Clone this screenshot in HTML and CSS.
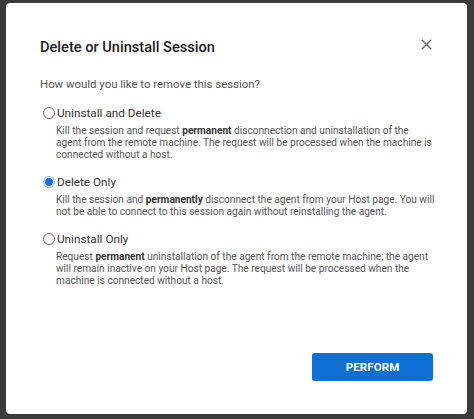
FILE: index.html
```html
<!DOCTYPE html>
<html>
<head>
<meta charset="utf-8">
<link rel="stylesheet" href="styles.css">
</head>
<body>
<div class="dialog">
  <div class="header">
    <h1 class="title">Delete or Uninstall Session</h1>
    <button class="close" aria-label="Close">
      <svg width="11" height="11" viewBox="0 0 11 11"><path d="M0.8 0.8L10.2 10.2M10.2 0.8L0.8 10.2" stroke="#6b6b6b" stroke-width="1.5" fill="none"/></svg>
    </button>
  </div>
  <p class="question">How would you like to remove this session?</p>
  <div class="options">
    <label class="option">
      <span class="row"><span class="radio"></span><span class="label">Uninstall and Delete</span></span>
      <span class="desc">Kill the session and request <b>permanent</b> disconnection and uninstallation of the agent from the remote machine. The request will be processed when the machine is connected without a host.</span>
    </label>
    <label class="option">
      <span class="row"><span class="radio checked"></span><span class="label">Delete Only</span></span>
      <span class="desc">Kill the session and <b>permanently</b> disconnect the agent from your Host page. You will not be able to connect to this session again without reinstalling the agent.</span>
    </label>
    <label class="option">
      <span class="row"><span class="radio"></span><span class="label">Uninstall Only</span></span>
      <span class="desc">Request <b>permanent</b> uninstallation of the agent from the remote machine; the agent will remain inactive on your Host page. The request will be processed when the machine is connected without a host.</span>
    </label>
  </div>
  <div class="footer">
    <button class="perform">PERFORM</button>
  </div>
</div>
</body>
</html>
```
FILE: styles.css
```css
html, body {
  margin: 0;
  padding: 0;
  background: #3b3b3b;
  height: 100%;
}
body {
  font-family: Roboto, "Liberation Sans", sans-serif;
  padding: 3px 0 0 6px;
  box-sizing: border-box;
}
.dialog {
  width: 461px;
  height: 411px;
  background: #fff;
  border-radius: 4px;
  box-sizing: border-box;
  padding: 32px 31px 0 34px;
  display: flex;
  flex-direction: column;
}
.header {
  display: flex;
  justify-content: space-between;
  align-items: flex-start;
}
.title {
  margin: 0;
  font-size: 14.6px;
  line-height: 24px;
  font-weight: 500;
  color: #222;
}
.close {
  border: 0;
  background: none;
  padding: 0;
  margin: 4px 4px 0 0;
  width: 11px;
  height: 11px;
  display: block;
}
.close svg { display: block; }
.question {
  margin: 17px 0 0 0;
  font-size: 11.4px;
  line-height: 16px;
  color: #555;
}
.options {
  display: flex;
  flex-direction: column;
  gap: 12px;
  margin-top: 12px;
}
.option {
  display: flex;
  flex-direction: column;
}
.row {
  display: flex;
  align-items: center;
  height: 18px;
}
.radio {
  width: 12px;
  height: 12px;
  border: 1px solid #6a6a6a;
  border-radius: 50%;
  box-sizing: border-box;
  margin: 0 2px 0 3px;
  position: relative;
  flex: none;
}
.radio.checked {
  border-color: #8ab4f0;
}
.radio.checked::after {
  content: "";
  position: absolute;
  left: 1px;
  top: 1px;
  width: 8px;
  height: 8px;
  border-radius: 50%;
  background: #1a6fe0;
}
.label {
  font-size: 11.75px;
  color: #333;
}
.desc {
  margin: 3px 0 0 16px;
  font-size: 10.15px;
  line-height: 12px;
  color: #555;
}
.desc b {
  font-weight: 700;
  color: #333;
}
.footer {
  margin-top: auto;
  display: flex;
  justify-content: flex-end;
  padding: 0 3px 33px 0;
}
.perform {
  width: 121px;
  height: 28px;
  border: 0;
  border-radius: 3px;
  background: #0b6fd3;
  color: #fff;
  font-family: Roboto, "Liberation Sans", sans-serif;
  font-weight: 700;
  font-size: 11.5px;
  letter-spacing: 0.1px;
}
```
